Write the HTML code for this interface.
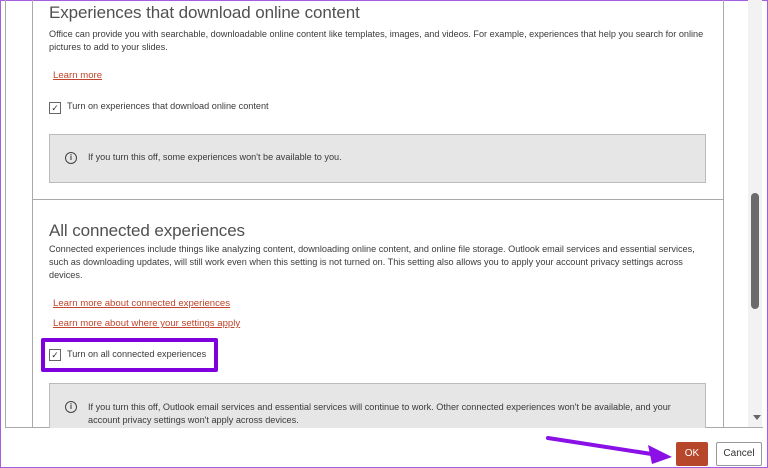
<!DOCTYPE html>
<html><head><style>
*{margin:0;padding:0;box-sizing:border-box}
body{width:768px;height:468px;overflow:hidden;background:#fff;font-family:"Liberation Sans",sans-serif;color:#333;position:relative}
.a{position:absolute}
.t{font-size:9.15px;color:#3a3a3a;white-space:nowrap}
.h{font-size:17px;color:#505050;font-weight:normal;letter-spacing:-0.1px}
.l{font-size:9.6px;color:#c0452c;text-decoration:underline;white-space:nowrap}
.cb{width:12px;height:12px;border:1px solid #666;background:#fff;font-size:9px;line-height:10px;text-align:center;color:#333}
.box{background:#e6e6e6;border:1px solid #bbb}
.info{width:12px;height:12px;border:1px solid #444;border-radius:50%;font-size:8px;line-height:10px;text-align:center;font-weight:bold;color:#444}
</style></head><body>
<div class="a" style="left:0;top:0;width:768px;height:468px;border:1px solid #a55ee0"></div>
<div class="a" style="left:5px;top:0;width:1px;height:428px;background:#aaa"></div>
<div class="a" style="left:5px;top:427px;width:758px;height:1px;background:#aaa"></div>
<div class="a" style="left:32px;top:0;width:1px;height:428px;background:#aaa"></div>
<div class="a" style="left:723px;top:0;width:1px;height:428px;background:#aaa"></div>
<div class="a" style="left:33px;top:199px;width:690px;height:1px;background:#aaa"></div>
<div class="a" style="left:748px;top:0;width:14px;height:427px;background:#f2f2f2"></div>
<div class="a" style="left:751px;top:193px;width:8px;height:116px;background:#6b6b6b;border-radius:4px"></div>
<div class="a" style="left:753px;top:415px;width:0;height:0;border-left:4px solid transparent;border-right:4px solid transparent;border-top:5px solid #666"></div>

<div class="a h" style="left:49px;top:3px">Experiences that download online content</div>
<div class="a t" style="left:49px;top:28px;line-height:13px">Office can provide you with searchable, downloadable online content like templates, images, and videos. For example, experiences that help you search for online<br>pictures to add to your slides.</div>
<div class="a l" style="left:53px;top:70px">Learn more</div>
<div class="a cb" style="left:49px;top:102px">✓</div>
<div class="a t" style="left:67px;top:101px">Turn on experiences that download online content</div>
<div class="a box" style="left:49px;top:134px;width:657px;height:49px"></div>
<div class="a info" style="left:65px;top:152px">i</div>
<div class="a t" style="left:88px;top:152px">If you turn this off, some experiences won't be available to you.</div>

<div class="a h" style="left:49px;top:221px">All connected experiences</div>
<div class="a t" style="left:49px;top:243px;line-height:13px">Connected experiences include things like analyzing content, downloading online content, and online file storage. Outlook email services and essential services,<br>such as downloading updates, will still work even when this setting is not turned on. This setting also allows you to apply your account privacy settings across<br>devices.</div>
<div class="a l" style="left:53px;top:298px">Learn more about connected experiences</div>
<div class="a l" style="left:53px;top:318px">Learn more about where your settings apply</div>
<div class="a" style="left:41px;top:338px;width:177px;height:34px;border:4px solid #8000dd;border-radius:2px"></div>
<div class="a cb" style="left:49px;top:349px">✓</div>
<div class="a t" style="left:67px;top:349px">Turn on all connected experiences</div>
<div class="a box" style="left:49px;top:383px;width:657px;height:45px;border-bottom:none"></div>
<div class="a info" style="left:65px;top:401px">i</div>
<div class="a t" style="left:88px;top:401px;line-height:13px">If you turn this off, Outlook email services and essential services will continue to work. Other connected experiences won't be available, and your<br>account privacy settings won't apply across devices.</div>

<svg class="a" style="left:540px;top:430px" width="140" height="35"><line x1="8" y1="8" x2="118" y2="25" stroke="#8a10e6" stroke-width="4" stroke-linecap="round"/><polygon points="132,27 108,15 112,34" fill="#8a10e6"/></svg>
<div class="a" style="left:676px;top:442px;width:32px;height:24px;background:#b7472a;border-radius:2px;color:#fff;font-size:10px;line-height:24px;text-align:center">OK</div>
<div class="a" style="left:716px;top:442px;width:46px;height:24px;background:#fff;border:1px solid #999;border-radius:2px;color:#333;font-size:10px;line-height:22px;text-align:center">Cancel</div>
</body></html>
